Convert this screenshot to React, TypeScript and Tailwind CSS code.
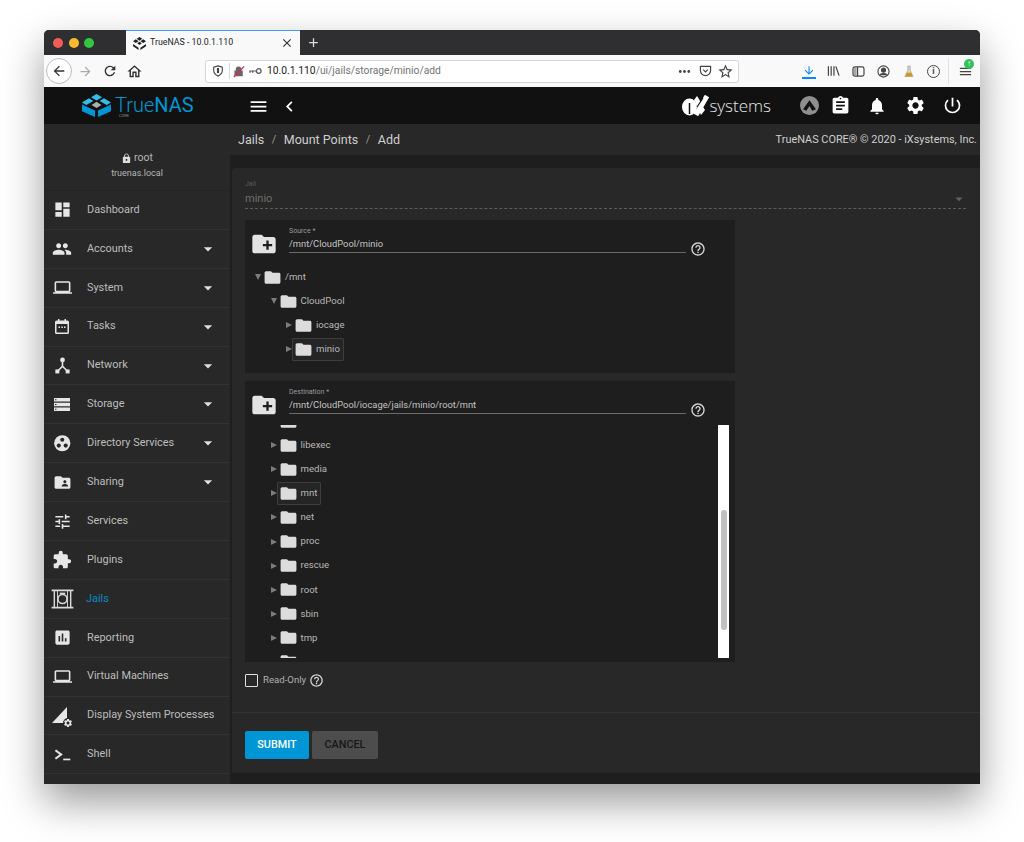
import type { ReactNode } from 'react';
import {
  MdDashboard, MdGroup, MdLaptop, MdFolderShared, MdTune, MdExtension, MdAssessment,
  MdArrowDropDown, MdMenu, MdChevronLeft, MdAssignment, MdNotifications, MdSettings, MdPowerSettingsNew,
  MdFolder, MdCreateNewFolder, MdHelpOutline, MdLock, MdClose, MdAdd, MdArrowBack, MdArrowForward, MdRefresh,
  MdOutlineHome, MdMoreHoriz, MdStarBorder, MdArrowDownward,
} from 'react-icons/md';

const ic = 'w-[19px] h-[19px] text-[#e6e6e6]';

function Hub() {
  return (
    <svg viewBox="0 0 24 24" className={ic} fill="none" stroke="currentColor">
      <path d="M12 7v6M12 13l-6 6M12 13l6 6" strokeWidth="2" />
      <circle cx="12" cy="5" r="3" fill="currentColor" stroke="none" />
      <rect x="3" y="17" width="5" height="5" fill="currentColor" stroke="none" />
      <rect x="16" y="17" width="5" height="5" fill="currentColor" stroke="none" />
    </svg>
  );
}

function Directory() {
  return (
    <svg viewBox="0 0 24 24" className="w-[18.5px] h-[18.5px] text-[#e6e6e6]">
      <circle cx="12" cy="12" r="10.5" fill="currentColor" />
      <circle cx="12" cy="7.5" r="2.7" fill="#282828" />
      <circle cx="7.5" cy="15" r="2.7" fill="#282828" />
      <circle cx="16.5" cy="15" r="2.7" fill="#282828" />
    </svg>
  );
}

function StorageIcon() {
  return (
    <svg viewBox="0 0 16 13" className="w-[16px] h-[13px] text-[#e6e6e6]">
      <path fillRule="evenodd" d="M0 0h16v3.500H0zM1 1.200v1h1.500v-1zM0 4.700h16v3.600H0zM1 6v1h1.500V6zM0 9.500h16V13H0zM1 10.700v1h1.500v-1z" fill="currentColor" />
    </svg>
  );
}

function TasksIcon() {
  return (
    <svg viewBox="0 0 14 15" className="w-[14px] h-[15px] text-[#e6e6e6]">
      <path fillRule="evenodd" d="M1.500 1.500H3V0h1.500v1.500h5V0H11v1.500h1.500A1.500 1.500 0 0114 3v10.500a1.500 1.500 0 01-1.500 1.500h-11A1.500 1.500 0 010 13.500V3a1.500 1.500 0 011.500-1.500zM1.500 5v8.500h11V5z" fill="currentColor" />
      <path d="M3.500 7.500h1.500V9H3.500zM6.300 7.500h1.500V9H6.300zM9 7.500h1.500V9H9z" fill="currentColor" />
    </svg>
  );
}

function JailIcon() {
  return (
    <svg viewBox="0 0 24 22" className="w-[23px] h-[20px] text-[#d8d8d8]" fill="none" stroke="currentColor">
      <path d="M0 1.500h24M0 20.500h24" strokeWidth="1.800" />
      <path d="M3 2v18M21 2v18" strokeWidth="1.600" />
      <path d="M6.500 2v18M17.500 2v18" strokeWidth="1" />
      <circle cx="12" cy="11" r="5" strokeWidth="1.800" />
      <path d="M9 5h6" strokeWidth="2" />
    </svg>
  );
}

function ProcessIcon() {
  return (
    <div className="relative w-[20px] h-[20px]">
      <svg viewBox="0 0 20 20" className="w-[20px] h-[20px] text-[#e6e6e6]">
        <path d="M0 17 L15 1 V17 Z" fill="currentColor" />
      </svg>
      <MdSettings className="absolute right-[-1px] bottom-[-2px] w-[10px] h-[10px] text-[#e6e6e6] bg-[#282828] rounded-full" />
    </div>
  );
}

function ShellIcon() {
  return (
    <svg viewBox="0 0 24 24" className="w-[17px] h-[17px] text-[#e6e6e6]" fill="none" stroke="currentColor" strokeWidth="3">
      <path d="M2 6l8 6-8 6" />
      <path d="M13 19h10" strokeWidth="2.400" />
    </svg>
  );
}

const NAV: { label: string; icon: ReactNode; caret?: boolean; active?: boolean }[] = [
  { label: 'Dashboard', icon: <MdDashboard className={ic} /> },
  { label: 'Accounts', icon: <MdGroup className="w-[20px] h-[20px] text-[#e6e6e6]" />, caret: true },
  { label: 'System', icon: <MdLaptop className={ic} />, caret: true },
  { label: 'Tasks', icon: <TasksIcon />, caret: true },
  { label: 'Network', icon: <Hub />, caret: true },
  { label: 'Storage', icon: <StorageIcon />, caret: true },
  { label: 'Directory Services', icon: <Directory />, caret: true },
  { label: 'Sharing', icon: <MdFolderShared className={ic} />, caret: true },
  { label: 'Services', icon: <MdTune className={ic} /> },
  { label: 'Plugins', icon: <MdExtension className="w-[20px] h-[20px] text-[#e6e6e6]" /> },
  { label: 'Jails', icon: <JailIcon />, active: true },
  { label: 'Reporting', icon: <MdAssessment className={ic} /> },
  { label: 'Virtual Machines', icon: <MdLaptop className={ic} /> },
  { label: 'Display System Processes', icon: <ProcessIcon /> },
  { label: 'Shell', icon: <ShellIcon /> },
];

const SOURCE_ROWS = [
  { name: '/mnt', depth: 0, open: true },
  { name: 'CloudPool', depth: 1, open: true },
  { name: 'iocage', depth: 2 },
  { name: 'minio', depth: 2, selected: true },
];

const DEST_ROWS = ['', 'libexec', 'media', 'mnt', 'net', 'proc', 'rescue', 'root', 'sbin', 'tmp', ''];

function TreeRow({ name, depth, open, selected }: { name: string; depth: number; open?: boolean; selected?: boolean }) {
  return (
    <div className="flex items-center h-[24.1px]" style={{ paddingLeft: depth * 15.5 }}>
      <div className="w-[16px] -mr-[5px] flex justify-center">
        <span
          className={
            open
              ? 'w-0 h-0 border-l-[3.5px] border-r-[3.5px] border-t-[6px] border-l-transparent border-r-transparent border-t-[#7c7c7c]'
              : 'w-0 h-0 border-t-[3.5px] border-b-[3.5px] border-l-[6px] border-t-transparent border-b-transparent border-l-[#7c7c7c]'
          }
        />
      </div>
      <div
        className={
          'flex items-center h-[23px] pl-[2px] pr-[3px] rounded-[1px] border ' +
          (selected ? 'border-[#3d3d3d] bg-[#252525]' : 'border-transparent')
        }
      >
        <MdFolder className="w-[19px] h-[19px] text-[#dcdcdc] -ml-[1px]" />
        <span className="ml-[3px] text-[9.6px] text-[#b8b8b8]">{name}</span>
      </div>
    </div>
  );
}

function PathField({ label, value }: { label: string; value: string }) {
  return (
    <div className="flex items-start pl-[5px] pt-[6px]">
      <MdCreateNewFolder className="w-[28px] h-[28px] text-[#e3e3e3] mt-[4px]" />
      <div className="ml-[11px] w-[397px]">
        <div className="text-[7px] leading-[10px] text-[#9a9a9a]">{label}</div>
        <div className="text-[9.35px] leading-[17px] text-[#c4c4c4] border-b border-[#6a6a6a] h-[18px] mt-[-1px]">{value}</div>
      </div>
      <MdHelpOutline className="w-[16px] h-[16px] text-[#d8d8d8] ml-[4px] mt-[15px]" />
    </div>
  );
}

function TabStrip() {
  return (
    <div className="flex items-stretch h-[25px] bg-[#2f2f31] rounded-t-[5px] font-['Liberation_Sans',sans-serif]">
      <div className="flex items-center w-[82px] pl-[9px] gap-[5.5px]">
        <span className="w-[10px] h-[10px] rounded-full bg-[#f25d55]" />
        <span className="w-[10px] h-[10px] rounded-full bg-[#f9bb2e]" />
        <span className="w-[10px] h-[10px] rounded-full bg-[#2fc840]" />
      </div>
      <div className="flex items-center w-[174px] bg-[#f9f9fa] border-t border-[#3f9bf5] pl-[7px]">
        <svg viewBox="0 0 14 14" className="w-[13px] h-[13px]">
          <path d="M7 0l3 2-3 2-3-2zM3 2.500l3 2-3 2-3-2zM11 2.500l3 2-3 2-3-2zM0 7.500l6 4v2.500L0 10zM14 7.500l-6 4v2.500l6-4z" fill="#222" />
          <path d="M7 5l2.500 1.800L7 8.500 4.500 6.800z" fill="#222" />
        </svg>
        <span className="ml-[4px] text-[8.8px] text-[#222] flex-1 font-['Roboto',sans-serif]">TrueNAS - 10.0.1.110</span>
        <MdClose className="w-[14px] h-[14px] text-[#333] mr-[6px]" />
      </div>
      <div className="flex items-center pl-[6px]">
        <MdAdd className="w-[15px] h-[15px] text-[#ddd]" />
      </div>
    </div>
  );
}

function ToolSlot({ w, children }: { w: string; children: ReactNode }) {
  return <div className={'flex items-center justify-center ' + w}>{children}</div>;
}

function Toolbar() {
  return (
    <div className="flex items-center h-[32px] bg-[#f9f9fa] pl-[2px] font-['Roboto',sans-serif]">
      <div className="flex items-center justify-center w-[26px] h-[26px] rounded-full border border-[#bdbdbd] bg-white">
        <MdArrowBack className="w-[16px] h-[16px] text-[#333]" />
      </div>
      <ToolSlot w="w-[26px]"><MdArrowForward className="w-[15px] h-[15px] text-[#aaa]" /></ToolSlot>
      <ToolSlot w="w-[24px]"><MdRefresh className="w-[16px] h-[16px] text-[#333]" /></ToolSlot>
      <ToolSlot w="w-[24px]"><MdOutlineHome className="w-[17px] h-[17px] text-[#333]" /></ToolSlot>
      <div className="ml-[59px] flex items-center w-[534px] h-[23px] bg-white border border-[#d4d4d4] rounded-[3px] pl-[5px] pr-[4px]">
        <svg viewBox="0 0 14 14" className="w-[12px] h-[12px] text-[#444] ml-[1px]" fill="none" stroke="currentColor" strokeWidth="1.300">
          <path d="M7 1l5 1.500v4c0 3-2 5-5 6.500C4 11.500 2 9.500 2 6.500v-4z" />
          <path d="M7 3.500v6" strokeWidth="2.500" />
        </svg>
        <span className="w-px h-[16px] bg-[#d8d8d8] ml-[5px]" />
        <svg viewBox="0 0 14 14" className="w-[13px] h-[13px] ml-[3px]">
          <path d="M3 6V4.500a3 3 0 016 0V6h1.500v6h-9V6z" fill="#666" />
          <path d="M1 13L12 1.500" stroke="#e22850" strokeWidth="1.500" />
        </svg>
        <svg viewBox="0 0 14 8" className="w-[13px] h-[8px] ml-[3px] text-[#555]" fill="none" stroke="currentColor" strokeWidth="1.300">
          <circle cx="10.500" cy="4" r="2.500" />
          <path d="M8 4H1v2M4 4v2" />
        </svg>
        <span className="ml-[5px] text-[10.3px] text-[#222]">10.0.1.110<span className="text-[#737373]">/ui/jails/storage/minio/add</span></span>
        <div className="flex-1" />
        <MdMoreHoriz className="w-[17px] h-[17px] text-[#444]" />
        <svg viewBox="0 0 14 13" className="w-[13px] h-[12px] ml-[6px] text-[#444]" fill="none" stroke="currentColor" strokeWidth="1.300">
          <path d="M1.500 1.500h11V6a5.500 5.500 0 01-11 0z" />
          <path d="M4.500 5L7 7.500 9.500 5" />
        </svg>
        <MdStarBorder className="w-[17px] h-[17px] text-[#444] ml-[5px]" />
      </div>
      <div className="ml-[57px] flex items-center">
        <ToolSlot w="w-[25px]"><MdArrowDownward className="w-[14px] h-[15px] text-[#0a84ff] border-b-2 border-[#0a84ff]" /></ToolSlot>
        <ToolSlot w="w-[25px]">
          <svg viewBox="0 0 14 12" className="w-[13px] h-[12px] text-[#444]" fill="none" stroke="currentColor" strokeWidth="1.300">
            <path d="M1.500 1v10M4.500 1v10M7.500 1v10M9.500 1l3.500 10" />
          </svg>
        </ToolSlot>
        <ToolSlot w="w-[25px]">
          <svg viewBox="0 0 14 12" className="w-[13px] h-[11px] text-[#444]" fill="none" stroke="currentColor" strokeWidth="1.300">
            <rect x="1" y="1" width="12" height="10" rx="2" />
            <path d="M6 1v10" />
            <path d="M2 2h3v8H2z" fill="currentColor" stroke="none" opacity=".45" />
          </svg>
        </ToolSlot>
        <ToolSlot w="w-[25px]">
          <svg viewBox="0 0 14 14" className="w-[13px] h-[13px] text-[#444]" fill="none" stroke="currentColor" strokeWidth="1.200">
            <circle cx="7" cy="7" r="6" />
            <circle cx="7" cy="5.500" r="2.200" fill="currentColor" />
            <path d="M3 11c1-2.500 7-2.500 8 0" fill="currentColor" />
          </svg>
        </ToolSlot>
        <ToolSlot w="w-[25px]">
          <svg viewBox="0 0 12 15" className="w-[10px] h-[13px]">
            <path d="M4.500 1h3v5l3.500 7.500H1L4.500 6z" fill="#d9d3bb" stroke="#999" strokeWidth=".7" />
            <path d="M3.500 9h5l2 4.500h-9z" fill="#c99a1d" />
          </svg>
        </ToolSlot>
        <ToolSlot w="w-[25px]">
          <div className="flex items-center justify-center w-[13px] h-[13px] rounded-full border-[1.5px] border-[#444] text-[9px] leading-none font-bold text-[#444]">i</div>
        </ToolSlot>
      </div>
      <span className="w-px h-[26px] bg-[#e2e2e2] ml-[2px]" />
      <div className="relative ml-[9px] w-[14px] h-[15px]">
        <MdMenu className="w-[15px] h-[15px] text-[#444]" />
        <span className="absolute -top-[5px] left-[6px] flex items-center justify-center w-[10px] h-[10px] rounded-full bg-[#30c25b] text-white text-[8px] leading-none">↑</span>
      </div>
    </div>
  );
}

function TopBar() {
  return (
    <div className="flex items-center h-[37px] bg-[#111111] font-['Roboto',sans-serif]">
      <div className="relative flex items-center w-[186px] pl-[38px]">
        <svg viewBox="0 0 29 23" className="w-[29px] h-[23px]">
          <path d="M14.500 0L9 3.200l5.500 3.300L20 3.200z" fill="#31beec" />
          <path d="M7 4.300L0 8.500l4.300 2.600 7.100-4.200zM22 4.300l-4.400 2.600 7.100 4.200L29 8.500z" fill="#31beec" />
          <path d="M14.500 7.700L9.500 11l5 3 5-3z" fill="#aeadae" />
          <path d="M0 10.500v6.700L13 23v-6.500zM29 10.500v6.700L16 23v-6.500z" fill="#0095d5" />
        </svg>
        <div className="ml-[4px] text-[20px] leading-[15px] text-[#0095d5] flex">
          <div className="font-light">True</div>
          <div>NAS</div>
        </div>
        <div className="absolute left-[75px] top-[20px] text-[4px] leading-[4px] text-[#8a8a8a]">CORE</div>
      </div>
      <MdMenu className="w-[21px] h-[21px] text-white ml-[18px] mt-[1px]" />
      <MdChevronLeft className="w-[21px] h-[21px] text-white ml-[10px] mt-[1px]" />
      <div className="flex-1" />
      <div className="flex items-center">
        <svg viewBox="0 0 27 21" className="w-[27px] h-[21px]">
          <ellipse cx="7.500" cy="12" rx="7.500" ry="8.500" fill="#fff" />
          <path d="M7.500 8v11" stroke="#111" strokeWidth="1.500" />
          <path d="M14 20L25 1" stroke="#fff" strokeWidth="5" />
          <path d="M15 1c3 4 5 10 8 14l-4 5c-2-4-5-11-7-15z" fill="#fff" />
          <path d="M15 12L21 3" stroke="#111" strokeWidth="1.200" />
        </svg>
        <span className="text-[17px] leading-none font-light text-[#e8e8e8] font-['Open_Sans',sans-serif]">systems</span>
      </div>
      <div className="ml-[29px] flex items-center justify-center w-[19px] h-[19px] rounded-full bg-[#8f8f8f]">
        <svg viewBox="0 0 14 14" className="w-[15px] h-[15px]">
          <path d="M1 10.500L7 2l6 8.500-3.500 1.500L7 7.500 4 12z" fill="#111" />
        </svg>
      </div>
      <MdAssignment className="w-[21px] h-[21px] text-white ml-[10.5px]" />
      <MdNotifications className="w-[20px] h-[20px] text-white ml-[16.5px]" />
      <MdSettings className="w-[21px] h-[21px] text-white ml-[17.5px]" />
      <MdPowerSettingsNew className="w-[21px] h-[21px] text-white ml-[16px] mr-[17.5px]" />
    </div>
  );
}

function Sidebar() {
  return (
    <div className="w-[186px] bg-[#282828] font-['Roboto',sans-serif]">
      <div className="h-[67px] flex flex-col items-center pt-[27px] border-b border-[#232323]">
        <div className="flex items-center text-[10.5px] leading-[14px] text-[#b5b5b5]">
          <MdLock className="w-[11px] h-[11px] text-[#ddd] mr-[2px]" />
          root
        </div>
        <div className="text-[9px] leading-[12px] mt-[2px] text-[#b5b5b5]">truenas.local</div>
      </div>
      {NAV.map(item => (
        <div key={item.label} className="flex items-center h-[38.9px] border-b border-[#323232]">
          <div className="w-[36px] flex justify-center">{item.icon}</div>
          <span className={'flex-1 text-[10.9px] ' + (item.active ? 'ml-[6px] text-[#0a8ac2]' : 'ml-[7px] text-[#bdbdbd]')}>{item.label}</span>
          {item.caret && <MdArrowDropDown className="w-[20px] h-[20px] text-[#dedede] mr-[12px]" />}
        </div>
      ))}
    </div>
  );
}

function Form() {
  return (
    <div className="flex-1 ml-[2px] mb-[11px] bg-[#282828] rounded-tl-[4px] flex flex-col">
      <div className="flex-1 px-[13px] pt-[11px]">
        <div className="text-[7px] leading-[10px] text-[#5a5a5a]">Jail</div>
        <div className="flex items-center justify-between h-[20px] w-[721px] border-b border-dashed border-[#5c5c5c] pt-[1px]">
          <span className="text-[11px] text-[#6f6f6f]">minio</span>
          <MdArrowDropDown className="w-[18px] h-[18px] text-[#5f5f5f] -mr-[2px]" />
        </div>

        <div className="mt-[11px] w-[490px] h-[153px] bg-[#1e1e1e]">
          <PathField label="Source *" value="/mnt/CloudPool/minio" />
          <div className="mt-[7px] pl-[5px]">
            {SOURCE_ROWS.map(r => <TreeRow key={r.name} {...r} />)}
          </div>
        </div>

        <div className="mt-[8px] w-[490px] h-[281px] bg-[#1e1e1e]">
          <PathField label="Destination *" value="/mnt/CloudPool/iocage/jails/minio/root/mnt" />
          <div className="relative mt-[6px] h-[233px] overflow-hidden pl-[5px]">
            <div className="-mt-[16px]">
              {DEST_ROWS.map((n, i) => <TreeRow key={i} name={n} depth={1} selected={n === 'mnt'} />)}
            </div>
            <div className="absolute right-[6px] top-0 w-[11px] h-[233px] bg-white flex justify-center">
              <div className="mt-[85px] w-[6px] h-[120px] rounded-full bg-[#c1c1c1]" />
            </div>
          </div>
        </div>

        <div className="flex items-center mt-[11px]">
          <span className="w-[13px] h-[13px] border-[1.5px] border-[#e0e0e0] rounded-[1px]" />
          <span className="ml-[5px] text-[9.6px] text-[#b0b0b0]">Read-Only</span>
          <MdHelpOutline className="w-[15px] h-[15px] text-[#d8d8d8] ml-[3px]" />
        </div>
      </div>
      <div className="h-[61px] border-t border-[#333333] flex items-start gap-[3px] px-[13px] pt-[18px]">
        <button className="w-[64px] h-[28px] rounded-[2px] bg-[#0095d5] text-white text-[10.8px] font-medium">SUBMIT</button>
        <button className="w-[66px] h-[28px] rounded-[2px] bg-[#4d4d4d] text-[#171717] text-[10.8px] font-medium">CANCEL</button>
      </div>
    </div>
  );
}

export default function App() {
  return (
    <div className="w-[1024px] h-[842px] bg-white pt-[30px] pl-[44px] overflow-hidden">
      <div className="w-[936px] h-[754px] flex flex-col bg-[#1e1e1e] rounded-t-[5px] shadow-[0_18px_40px_rgba(0,0,0,0.4)]">
        <TabStrip />
        <Toolbar />
        <TopBar />
        <div className="flex flex-1 min-h-0 font-['Roboto',sans-serif]">
          <Sidebar />
          <div className="flex-1 flex flex-col">
            <div className="h-[31px] bg-[#282828] flex items-center justify-between pl-[8px] pr-[3px] pt-[2px]">
              <div className="flex items-center text-[12.5px] text-[#cfcfcf]">
                Jails<span className="mx-[7.5px] text-[11px] text-[#9a9a9a]">/</span>
                Mount Points<span className="mx-[7.5px] text-[11px] text-[#9a9a9a]">/</span>
                Add
              </div>
              <span className="text-[10.9px] text-[#cfcfcf]">TrueNAS CORE® © 2020 - iXsystems, Inc.</span>
            </div>
            <div className="flex-1 flex flex-col pt-[13px] min-h-0">
              <Form />
            </div>
          </div>
        </div>
      </div>
    </div>
  );
}
